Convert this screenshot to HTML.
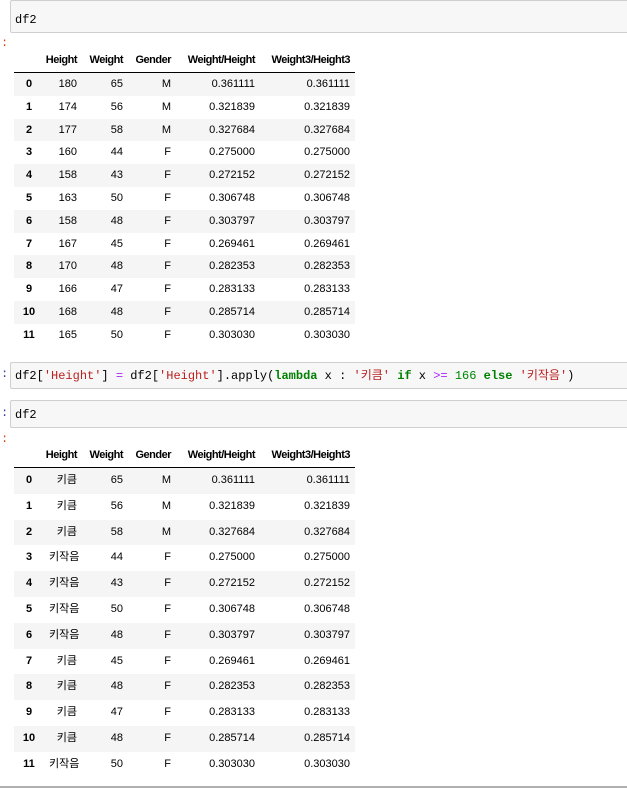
<!DOCTYPE html><html><head><meta charset="utf-8"><style>
body{margin:0;width:627px;height:789px;background:#fff;position:relative;overflow:hidden;font-family:"Liberation Sans","Noto Sans CJK KR",sans-serif}
.cell{position:absolute;left:10px;width:640px;background:#f7f7f7;border:1px solid #cfcfcf;border-radius:2px;box-sizing:border-box;font-family:"Liberation Mono","Noto Sans CJK KR",monospace;font-size:12px;color:#000;padding-left:4px}
.p{position:absolute;left:1px;font-size:12px;font-family:"Liberation Mono",monospace}
table{position:absolute;left:14px;border-collapse:collapse;font-size:11px;color:#000;table-layout:fixed;width:341px}
th,td{text-align:right;padding:0 5px;white-space:nowrap;overflow:visible}
thead th{height:24px;vertical-align:middle;border-bottom:1px solid #000;letter-spacing:-0.5px;padding-left:0}
tbody th{text-align:center;font-weight:bold}
tbody tr:nth-child(odd){background:#f5f5f5}
.s{color:#ba2121}.k{color:#008000;font-weight:bold}.o{color:#aa22ff}.n{color:#080}
</style></head><body>
<div class="cell" style="top:0;height:33px;line-height:38px">df2</div>
<div class="p" style="top:36px;color:#d84315">:</div>
<table style="top:48px"><colgroup><col style="width:30px"><col style="width:38px"><col style="width:46px"><col style="width:48px"><col style="width:84px"><col style="width:95px"></colgroup><thead><tr><th></th><th>Height</th><th>Weight</th><th>Gender</th><th>Weight/Height</th><th>Weight3/Height3</th></tr></thead>
<tbody style="line-height:22.8px">
<tr><th>0</th><td>180</td><td>65</td><td>M</td><td>0.361111</td><td>0.361111</td></tr>
<tr><th>1</th><td>174</td><td>56</td><td>M</td><td>0.321839</td><td>0.321839</td></tr>
<tr><th>2</th><td>177</td><td>58</td><td>M</td><td>0.327684</td><td>0.327684</td></tr>
<tr><th>3</th><td>160</td><td>44</td><td>F</td><td>0.275000</td><td>0.275000</td></tr>
<tr><th>4</th><td>158</td><td>43</td><td>F</td><td>0.272152</td><td>0.272152</td></tr>
<tr><th>5</th><td>163</td><td>50</td><td>F</td><td>0.306748</td><td>0.306748</td></tr>
<tr><th>6</th><td>158</td><td>48</td><td>F</td><td>0.303797</td><td>0.303797</td></tr>
<tr><th>7</th><td>167</td><td>45</td><td>F</td><td>0.269461</td><td>0.269461</td></tr>
<tr><th>8</th><td>170</td><td>48</td><td>F</td><td>0.282353</td><td>0.282353</td></tr>
<tr><th>9</th><td>166</td><td>47</td><td>F</td><td>0.283133</td><td>0.283133</td></tr>
<tr><th>10</th><td>168</td><td>48</td><td>F</td><td>0.285714</td><td>0.285714</td></tr>
<tr><th>11</th><td>165</td><td>50</td><td>F</td><td>0.303030</td><td>0.303030</td></tr>
</tbody></table>
<div class="p" style="top:367px;color:#303f9f">:</div>
<div class="cell" style="top:362px;height:27px;line-height:26px">df2[<span class="s">'Height'</span>] <span class="o">=</span> df2[<span class="s">'Height'</span>].apply(<span class="k">lambda</span> x : <span class="s">'키큼'</span> <span class="k">if</span> x <span class="o">&gt;=</span> <span class="n">166</span> <span class="k">else</span> <span class="s">'키작음'</span>)</div>
<div class="p" style="top:406px;color:#303f9f">:</div>
<div class="cell" style="top:400px;height:28px;line-height:28px">df2</div>
<div class="p" style="top:432px;color:#d84315">:</div>
<table style="top:443px"><colgroup><col style="width:30px"><col style="width:38px"><col style="width:46px"><col style="width:48px"><col style="width:84px"><col style="width:95px"></colgroup><thead><tr><th></th><th>Height</th><th>Weight</th><th>Gender</th><th>Weight/Height</th><th>Weight3/Height3</th></tr></thead>
<tbody style="line-height:25.8px">
<tr><th>0</th><td>키큼</td><td>65</td><td>M</td><td>0.361111</td><td>0.361111</td></tr>
<tr><th>1</th><td>키큼</td><td>56</td><td>M</td><td>0.321839</td><td>0.321839</td></tr>
<tr><th>2</th><td>키큼</td><td>58</td><td>M</td><td>0.327684</td><td>0.327684</td></tr>
<tr><th>3</th><td>키작음</td><td>44</td><td>F</td><td>0.275000</td><td>0.275000</td></tr>
<tr><th>4</th><td>키작음</td><td>43</td><td>F</td><td>0.272152</td><td>0.272152</td></tr>
<tr><th>5</th><td>키작음</td><td>50</td><td>F</td><td>0.306748</td><td>0.306748</td></tr>
<tr><th>6</th><td>키작음</td><td>48</td><td>F</td><td>0.303797</td><td>0.303797</td></tr>
<tr><th>7</th><td>키큼</td><td>45</td><td>F</td><td>0.269461</td><td>0.269461</td></tr>
<tr><th>8</th><td>키큼</td><td>48</td><td>F</td><td>0.282353</td><td>0.282353</td></tr>
<tr><th>9</th><td>키큼</td><td>47</td><td>F</td><td>0.283133</td><td>0.283133</td></tr>
<tr><th>10</th><td>키큼</td><td>48</td><td>F</td><td>0.285714</td><td>0.285714</td></tr>
<tr><th>11</th><td>키작음</td><td>50</td><td>F</td><td>0.303030</td><td>0.303030</td></tr>
</tbody></table>
<div style="position:absolute;left:0;top:786px;width:627px;height:2px;background:#b0b0b0"></div>
</body></html>
